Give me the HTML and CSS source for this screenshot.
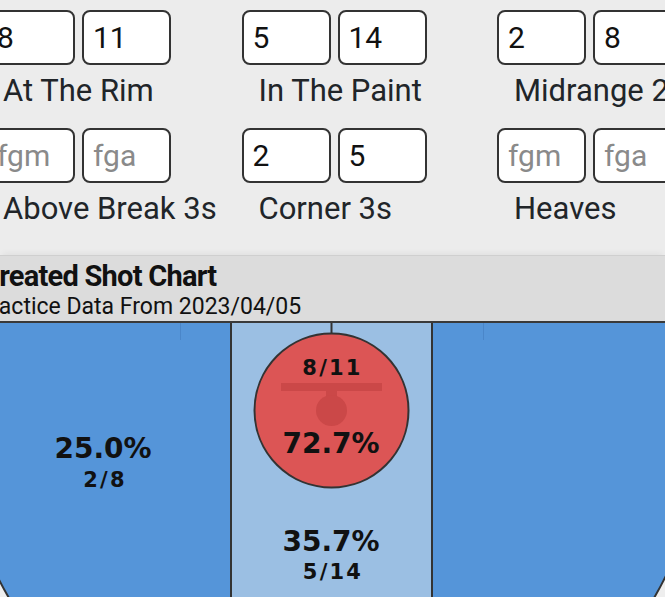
FILE: index.html
```html
<!DOCTYPE html>
<html lang="en">
<head>
<meta charset="utf-8">
<title>Created Shot Chart</title>
<link rel="stylesheet" href="styles.css">
</head>
<body>
<div class="page">
  <section class="stats">
    <div class="stat">
      <div class="pair"><input class="num" value="8" placeholder="fgm"><input class="num" value="11" placeholder="fga"></div>
      <div class="label">At The Rim</div>
    </div>
    <div class="stat">
      <div class="pair"><input class="num" value="5" placeholder="fgm"><input class="num" value="14" placeholder="fga"></div>
      <div class="label">In The Paint</div>
    </div>
    <div class="stat">
      <div class="pair"><input class="num" value="2" placeholder="fgm"><input class="num" value="8" placeholder="fga"></div>
      <div class="label">Midrange 2s</div>
    </div>
    <div class="stat">
      <div class="pair"><input class="num" value="" placeholder="fgm"><input class="num" value="" placeholder="fga"></div>
      <div class="label">Above Break 3s</div>
    </div>
    <div class="stat">
      <div class="pair"><input class="num" value="2" placeholder="fgm"><input class="num" value="5" placeholder="fga"></div>
      <div class="label">Corner 3s</div>
    </div>
    <div class="stat">
      <div class="pair"><input class="num" value="" placeholder="fgm"><input class="num" value="" placeholder="fga"></div>
      <div class="label">Heaves</div>
    </div>
  </section>

  <section class="chart-head">
    <h2 class="title">Created Shot Chart</h2>
    <p class="sub">Practice Data From 2023/04/05</p>
  </section>

  <div class="court">
    <svg class="court-svg" width="665" height="274" viewBox="0 0 665 274">
      <rect class="three-zone" x="0" y="0" width="665" height="274"/>
      <circle class="mid-zone" cx="331.5" cy="87.5" r="373"/>
      <line class="faint" x1="180.5" y1="0" x2="180.5" y2="17"/>
      <line class="faint" x1="483.5" y1="0" x2="483.5" y2="17"/>
      <rect class="paint" x="231" y="-5" width="201" height="320"/>
      <line class="stroke" x1="331.5" y1="0" x2="331.5" y2="11"/>
      <circle class="rim-zone" cx="331.5" cy="87.5" r="77"/>
      <rect class="hoop" x="281" y="60" width="101" height="8"/>
      <rect class="hoop" x="326" y="68" width="11" height="6"/>
      <circle class="hoop" cx="331.5" cy="87.5" r="15.5"/>
      <text class="small" x="332.5" y="52">8/11</text>
      <text class="big" x="331" y="130">72.7%</text>
      <text class="big" x="103" y="135">25.0%</text>
      <text class="small" x="105" y="164">2/8</text>
      <text class="big" x="331" y="228">35.7%</text>
      <text class="small" x="333" y="256">5/14</text>
    </svg>
  </div>
</div>
</body>
</html>
```

FILE: styles.css
```css
html, body {
  margin: 0;
  padding: 0;
  overflow: hidden;
  background: #ececec;
}

.page {
  width: 665px;
  overflow: hidden;
}

.stats {
  display: grid;
  grid-template-columns: repeat(3, 255.5px);
  row-gap: 20px;
  width: max-content;
  margin-left: -14px;
  padding: 10px 0 29px;
}

.pair {
  display: flex;
  gap: 7px;
}

.num {
  box-sizing: border-box;
  width: 89px;
  height: 55px;
  margin: 0;
  padding: 0 9px;
  border: 2px solid #333;
  border-radius: 8px;
  background: #fff;
  color: #111;
  font: 30px "Roboto", sans-serif;
  outline: none;
}

.num::placeholder {
  color: #8a8a8a;
}

.label {
  margin-top: 8px;
  padding-left: 17px;
  color: #212529;
  font: 31px/35px "Roboto", sans-serif;
  white-space: nowrap;
}

.chart-head {
  background: #dcdcdc;
  border-top: 1px solid #cfcfcf;
  box-shadow: 0 -5px 6px -3px rgba(0, 0, 0, 0.05);
  padding-top: 3px;
}

.title {
  margin: 0 0 0 -19px;
  color: #111;
  font: bold 29px/34px "Roboto", sans-serif;
  letter-spacing: -0.75px;
  white-space: nowrap;
}

.sub {
  margin: 0 0 0 -23px;
  color: #111;
  font: 23px/28px "Roboto", sans-serif;
  white-space: nowrap;
}

.court {
  border-top: 2px solid #3a3a3a;
  background: #5595d9;
}

.court-svg {
  display: block;
}

.three-zone {
  fill: #eeeeee;
}

.mid-zone {
  fill: #5595d9;
  stroke: #333;
  stroke-width: 2;
}

.faint {
  stroke: #4a86c9;
  stroke-width: 1;
}

.paint {
  fill: #9bbfe3;
  stroke: #333;
  stroke-width: 2;
}

.stroke {
  stroke: #333;
  stroke-width: 2;
}

.rim-zone {
  fill: #dc5555;
  stroke: #333;
  stroke-width: 2;
}

.hoop {
  fill: #cb4848;
}

.big, .small {
  font-family: "DejaVu Sans", sans-serif;
  font-weight: bold;
  fill: #111;
  text-anchor: middle;
}

.big {
  font-size: 28px;
}

.small {
  font-size: 21px;
  letter-spacing: 2.2px;
}
```
